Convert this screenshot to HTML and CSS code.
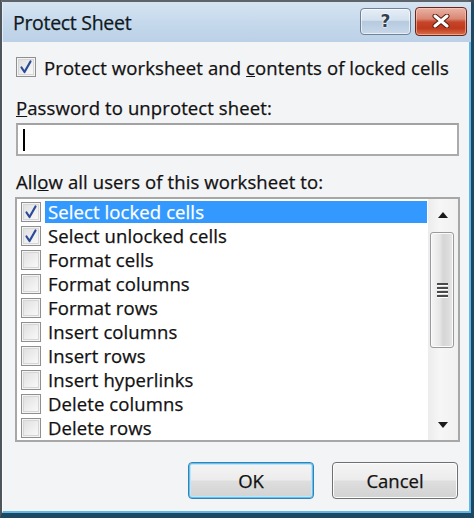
FILE: index.html
```html
<!DOCTYPE html>
<html>
<head>
<meta charset="utf-8">
<link rel="stylesheet" href="styles.css">
</head>
<body>
<div class="window">
  <div class="titlebar">
    <span class="title">Protect Sheet</span>
    <div class="caption-btns">
      <div class="cap-btn help"><span>?</span></div>
      <div class="cap-btn close">
        <svg width="20" height="14" viewBox="0 0 20 14">
          <path d="M4 2 L16 12 M16 2 L4 12" stroke="#5a1a10" stroke-width="5" stroke-linecap="round"/>
          <path d="M4 2 L16 12 M16 2 L4 12" stroke="#ffffff" stroke-width="3" stroke-linecap="round"/>
        </svg>
      </div>
    </div>
  </div>
  <div class="content">
    <div class="check-row top-check">
      <span class="cb checked"><svg viewBox="0 0 20 20" width="20" height="20"><path d="M5.5 10.5 L8.5 15 L14.5 4.5" fill="none" stroke="#2b4a9a" stroke-width="2.2" stroke-linecap="round" stroke-linejoin="round"/></svg></span>
      <span class="txt">Protect worksheet and <u>c</u>ontents of locked cells</span>
    </div>
    <div class="label pw-label"><u>P</u>assword to unprotect sheet:</div>
    <div class="input"><span class="caret"></span></div>
    <div class="label allow-label">All<u>o</u>w all users of this worksheet to:</div>
    <div class="listbox">
      <div class="items">
        <div class="item selected"><span class="cb checked"><svg viewBox="0 0 20 20" width="20" height="20"><path d="M5.5 10.5 L8.5 15 L14.5 4.5" fill="none" stroke="#2b4a9a" stroke-width="2.2" stroke-linecap="round" stroke-linejoin="round"/></svg></span><span class="txt">Select locked cells</span></div>
        <div class="item"><span class="cb checked"><svg viewBox="0 0 20 20" width="20" height="20"><path d="M5.5 10.5 L8.5 15 L14.5 4.5" fill="none" stroke="#2b4a9a" stroke-width="2.2" stroke-linecap="round" stroke-linejoin="round"/></svg></span><span class="txt">Select unlocked cells</span></div>
        <div class="item"><span class="cb"></span><span class="txt">Format cells</span></div>
        <div class="item"><span class="cb"></span><span class="txt">Format columns</span></div>
        <div class="item"><span class="cb"></span><span class="txt">Format rows</span></div>
        <div class="item"><span class="cb"></span><span class="txt">Insert columns</span></div>
        <div class="item"><span class="cb"></span><span class="txt">Insert rows</span></div>
        <div class="item"><span class="cb"></span><span class="txt">Insert hyperlinks</span></div>
        <div class="item"><span class="cb"></span><span class="txt">Delete columns</span></div>
        <div class="item"><span class="cb"></span><span class="txt">Delete rows</span></div>
      </div>
      <div class="scrollbar">
        <div class="arrow up"><svg width="10" height="6" viewBox="0 0 10 6"><path d="M0 6 L5 0 L10 6 Z" fill="#1a1a1a"/></svg></div>
        <div class="track">
          <div class="thumb"><span class="grip"></span><span class="grip"></span><span class="grip"></span><span class="grip"></span></div>
        </div>
        <div class="arrow down"><svg width="10" height="6" viewBox="0 0 10 6"><path d="M0 0 L10 0 L5 6 Z" fill="#1a1a1a"/></svg></div>
      </div>
    </div>
    <div class="buttons">
      <div class="btn default">OK</div>
      <div class="btn">Cancel</div>
    </div>
  </div>
</div>
</body>
</html>
```

FILE: styles.css
```css
* { box-sizing: border-box; }
html, body { margin: 0; padding: 0; background: #3b4a55; }
body { width: 474px; height: 518px; overflow: hidden; }

.window {
  width: 474px;
  height: 518px;
  border-left: 2px solid #4e555b;
  border-top: 2px solid #5d646a;
  border-right: 3px solid #1f4963;
  border-bottom: 5px solid #1d4862;
  border-top-right-radius: 6px;
  display: flex;
  flex-direction: column;
  font-family: "Open Sans", "Noto Sans", sans-serif;
  color: #111111;
  background: #f3f4f6;
  -webkit-text-stroke: 0.25px currentColor;
}

.titlebar {
  height: 40px;
  flex: none;
  display: flex;
  align-items: center;
  justify-content: space-between;
  padding: 0 4px 0 10px;
  background: linear-gradient(to bottom, #d6e4f2 0%, #c6d9ec 50%, #bcd1e7 100%);
  border-left: 1px solid #e6eef7;
}
.title {
  font-size: 19.5px;
  color: #101820;
  letter-spacing: -0.3px;
  margin-top: 1px;
}
.caption-btns {
  display: flex;
  gap: 4px;
  align-items: center;
  margin-top: -2px;
}
.cap-btn {
  width: 51px;
  height: 27px;
  border-radius: 4px;
  display: flex;
  align-items: center;
  justify-content: center;
}
.help {
  border: 1px solid #6f8298;
  background: linear-gradient(to bottom, #e6eef7 0%, #d3e0ee 45%, #b7cade 50%, #c7d8ea 100%);
  box-shadow: inset 0 0 0 1px rgba(255,255,255,0.6);
}
.help span {
  font-family: "DejaVu Sans", sans-serif;
  font-weight: bold;
  font-size: 17px;
  color: #33404e;
  text-shadow: 0 0 2px #ffffff, 0 0 2px #ffffff;
  line-height: 1;
  -webkit-text-stroke: 0;
}
.close {
  width: 52px;
  height: 29px;
  border: 1px solid #6e2417;
  background: linear-gradient(to bottom, #eab3a4 0%, #d98773 40%, #c5452a 52%, #c0391c 75%, #d5704f 100%);
  box-shadow: inset 0 0 0 1px rgba(255,220,210,0.5);
}

.content {
  flex: 1;
  border-left: 1px solid #fbfcfd;
  border-right: 2px solid #62b8e4;
  border-bottom: 2px solid #62b8e4;
  padding: 0 9px 0 12px;
  background: #f3f4f6;
}

.cb {
  width: 20px;
  height: 20px;
  flex: none;
  border: 1px solid #8d8f91;
  background: linear-gradient(135deg, #dcdcdc 0%, #f0f0f0 60%, #fbfbfb 100%);
  box-shadow: inset 0 0 0 1px #f4f4f4, inset 0 0 0 2px #d6d6d6;
  position: relative;
}
.cb svg { position: absolute; left: -1px; top: -1px; }

.check-row {
  display: flex;
  align-items: center;
  height: 22px;
  font-size: 18.5px;
}
.top-check { margin-top: 14px; padding-left: 1px; }
.top-check .txt { margin-left: 8px; letter-spacing: 0.1px; }

.label {
  font-size: 18.5px;
  height: 22px;
  line-height: 22px;
  padding-left: 1px;
  letter-spacing: 0.1px;
}
.pw-label { margin-top: 19px; }
.allow-label { margin-top: 15px; }

.input {
  margin-top: 4px;
  height: 33px;
  margin-left: 1px;
  margin-right: 1px;
  border: 2px solid #ababab;
  border-top-color: #a2a2a2;
  background: #ffffff;
  padding: 4px 5px;
}
.caret {
  display: block;
  width: 2px;
  height: 22px;
  background: #000;
}

.listbox {
  margin-top: 4px;
  height: 245px;
  border: 2px solid #a7a7a7;
  background: #ffffff;
  display: flex;
  padding: 0 0 0 4px;
}
.items {
  flex: 1;
  padding-top: 1px;
}
.item {
  height: 24px;
  display: flex;
  align-items: center;
  font-size: 18.5px;
}
.item .txt {
  margin-left: 4px;
  padding: 0 3px;
  height: 22px;
  line-height: 21px;
  flex: 1;
  letter-spacing: 0.1px;
}
.item.selected .txt {
  background: #3399ff;
  color: #ffffff;
}

.scrollbar {
  width: 30px;
  flex: none;
  display: flex;
  flex-direction: column;
  background: linear-gradient(to right, #ececec, #f6f6f6 40%, #f1f1f1);
  margin-left: 1px;
}
.arrow {
  height: 30px;
  display: flex;
  align-items: center;
  justify-content: center;
  flex: none;
}
.arrow.up { padding-top: 2px; }
.track { flex: 1; padding: 3px 4px 0 2px; }
.thumb {
  height: 116px;
  border: 1px solid #999a9c;
  border-radius: 3px;
  background: linear-gradient(to right, #f6f6f6 0%, #e6e6e6 40%, #d6d6d6 55%, #dcdcdc 80%, #e9e9e9 100%);
  box-shadow: inset 0 0 0 1px #fbfbfb;
  display: flex;
  flex-direction: column;
  align-items: center;
  justify-content: center;
  gap: 2px;
}
.grip {
  display: block;
  width: 11px;
  height: 2px;
  background: #4a4a4a;
  box-shadow: 0 1px 0 #ffffff;
}

.buttons {
  margin-top: 20px;
  display: flex;
  justify-content: flex-end;
  gap: 18px;
  padding-right: 2px;
}
.btn {
  width: 126px;
  height: 37px;
  border: 1px solid #707070;
  border-radius: 4px;
  background: linear-gradient(to bottom, #f4f4f4 0%, #ececec 48%, #dedede 52%, #d2d2d2 100%);
  box-shadow: inset 0 0 0 1px #fcfcfc;
  display: flex;
  align-items: center;
  justify-content: center;
  font-size: 18.5px;
}
.btn.default {
  border-color: #3a7eb5;
  box-shadow: inset 0 0 0 1px #5cc4ee, inset 0 0 0 2px #bfe6f7;
}
```
